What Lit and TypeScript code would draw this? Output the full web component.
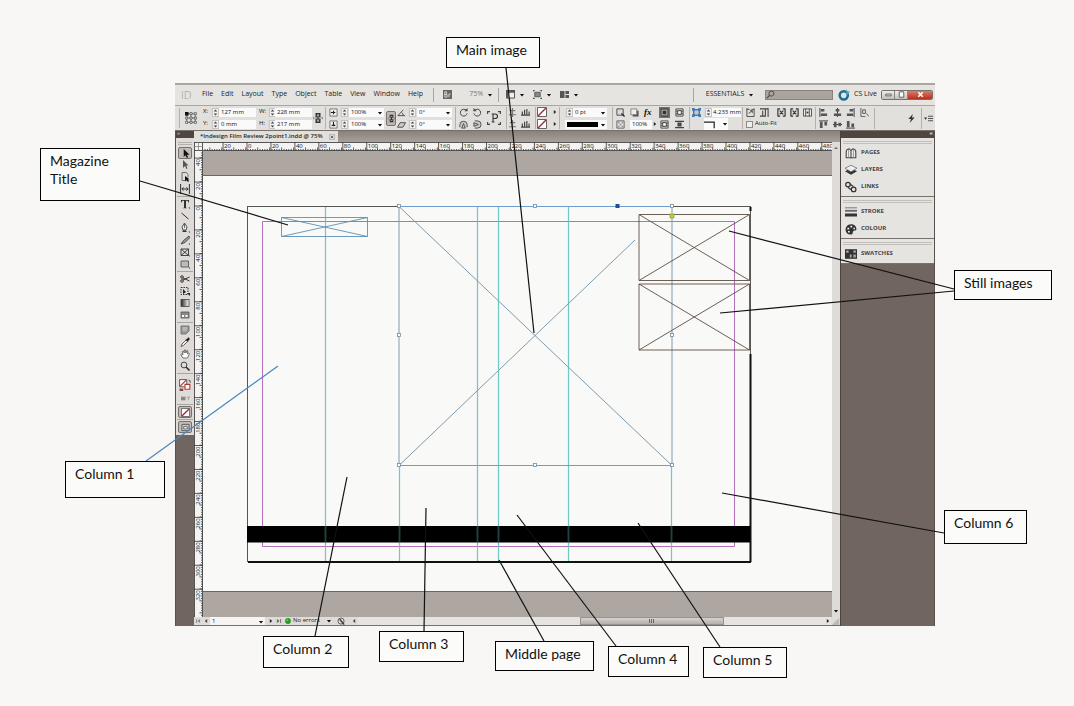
import { LitElement, html, svg, css, TemplateResult } from "lit";
import { customElement } from "lit/decorators.js";

const icons: Record<string, TemplateResult> = {
  select: svg`<path d="M3 0v9l2-2 1.500 3 1.500-.8L6.500 6.500h3z" fill="#111"/>`,
  direct: svg`<path d="M3 0v8l2-2 1.500 3 1-.5L6.200 5.500h2.300z" fill="#555"/>`,
  page: svg`<path d="M2 .5h4.500l1.500 2v3M2 .5v8h3" fill="#ddd" stroke="#555" stroke-width=".8"/><path d="M5 4v5.500l1.500-1.300L8 10l1-.7-1-2h1.500z" fill="#111"/>`,
  gap: svg`<path d="M.6 0v10M9.400 0v10M2 5h6M3.500 3.300L1.800 5l1.700 1.700M6.500 3.300L8.200 5 6.500 6.700" fill="none" stroke="#333"/>`,
  type: svg`<path d="M1 1h8v2.400h-.6C8.200 2 7.600 1.800 6 1.800V8.500l1 .7H3l1-.7V1.800C2.400 1.800 1.800 2 1.600 3.400H1z" fill="#333"/><path d="M8.500 8.500h1.500v1.500z" fill="#222"/>`,
  line: svg`<path d="M1.500 2l7 6" stroke="#333"/>`,
  pen: svg`<path d="M4.500 0L7 4 6 7H3L2 4z" fill="#eee" stroke="#444" stroke-width=".9"/><path d="M4.500 1v4" stroke="#333" stroke-width=".7"/><path d="M2.500 7.500h4v1.500h-4zM8.500 8.500H10V10z" fill="#333"/>`,
  pencil: svg`<path d="M9 1L3.500 5.500 1 9l4-1.500L9.500 3z" fill="#999" stroke="#333" stroke-width=".8"/><path d="M8.500 8.500H10V10z" fill="#222"/>`,
  frame: svg`<path d="M1 2h7.500v6.500H1zM1 2l7.500 6.500M8.500 2L1 8.500" fill="none" stroke="#333" stroke-width=".9"/><path d="M9 8.500h1V10z" fill="#222"/>`,
  rect: svg`<path d="M1 2h7.500v6H1z" fill="#bbb" stroke="#555" stroke-width=".9"/><path d="M8.500 8.500H10V10z" fill="#222"/>`,
  scissors: svg`<path d="M9.500 3L3 6M9.500 7L3 4" stroke="#333"/><circle cx="2" cy="3" r="1.300" fill="none" stroke="#333"/><circle cx="2" cy="7" r="1.300" fill="none" stroke="#333"/>`,
  transform: svg`<rect x="1" y="1.500" width="7" height="7" fill="none" stroke="#333" stroke-dasharray="1.500 1"/><path d="M3 3v5l3-2z" fill="#222"/><path d="M7 7h3v3z" fill="#222"/>`,
  gradient: svg`<defs><linearGradient id="g"><stop offset="0" stop-color="#222"/><stop offset="1" stop-color="#fff"/></linearGradient></defs><rect x="1" y="1.500" width="8" height="7" fill="url(#g)" stroke="#444" stroke-width=".8"/>`,
  feather: svg`<path d="M1 2h8v6H1z" fill="#888" stroke="#555" stroke-width=".8"/><path d="M2 5h2v2H2zM5.500 5h2v2h-2z" fill="#fff"/>`,
  note: svg`<path d="M1 1h8v5L6 9H1z" fill="#999" stroke="#666" stroke-width=".8"/><path d="M2.500 3h5M2.500 5h4" stroke="#eee" stroke-width=".7"/>`,
  dropper: svg`<path d="M1 9.500L2 7l4-4 1.500 1.500-4 4z" fill="#eee" stroke="#444" stroke-width=".8"/><path d="M5.500 2.500L8 5l.5-1.500L10 2 8.300.3 7 2z" fill="#222"/>`,
  hand: svg`<path d="M3 9L.8 5.500l1-.5L3 6 2.300 2.500l1-.3L4.300 4 4.300 1h1.200L5.900 4l1-2.500 1 .3L7.500 5l1.300-1 .7.7L7.500 9z" fill="#fff" stroke="#555" stroke-width=".8"/>`,
  zoom: svg`<circle cx="4" cy="4" r="2.900" fill="#ddd" stroke="#444"/><path d="M6 6l3.500 3.500" stroke="#333" stroke-width="1.600"/>`,
  none: svg`<path d="M.5.500h9v9h-9z" fill="#fff" stroke="#555" stroke-width=".9"/><path d="M1 9l8-8" stroke="#a32b36" stroke-width="1.500"/>`,
  view: svg`<path d="M1 1.500h8v7H1z" fill="#ccc" stroke="#555"/><path d="M3 4h4v2.500H3z" fill="#fff" stroke="#444" stroke-width=".8"/>`,
  swatches: svg`<path d="M.5.500h6v6h-6z" fill="#fff" stroke="#555" stroke-width=".8"/><path d="M1 6l5-5" stroke="#b33"/><path d="M5 4.500h4v4H5z" fill="#fff" stroke="#b33" stroke-width=".9"/><path d="M8 1q1.500 0 1.500 2" fill="none" stroke="#444" stroke-width=".8"/><path d="M.5 8h3v2h-3z" fill="#844"/>`,
  mini: svg`<path d="M0 3h5v4H0z" fill="#888"/><path d="M6.500 3.500H10M8.200 3.500V7" stroke="#999" stroke-width=".9"/>`,
  refpoint: svg`<g fill="#fff" stroke="#444" stroke-width=".6"><path d="M1.500 1.500h7v7h-7zM5 1.500v7M1.500 5h7" fill="none"/><path d="M4.200.5h1.700v1.700H4.200zM7.800.5h1.700v1.700H7.800zM.5 4.200h1.700v1.700H.5zM4.200 4.200h1.700v1.700H4.200zM7.800 4.200h1.700v1.700H7.800zM.5 7.800h1.700v1.700H.5zM4.200 7.800h1.700v1.700H4.200zM7.800 7.800h1.700v1.700H7.800z"/></g><path d="M0 0h3v3H0z" fill="#111"/>`,
  chain: svg`<path d="M3.500 4.500V1.500h3v3M3.500 5.500v3h3v-3M5 3v4" fill="none" stroke="#333" stroke-width="1.200"/><path d="M1.500 4v2M8.500 4v2" stroke="#666" stroke-width=".8"/>`,
  scaleX: svg`<path d="M1 1h8v8H1z" fill="#eee" stroke="#555" stroke-width=".8"/><path d="M2 5h5M5 3v4" stroke="#222" stroke-width="1.200"/>`,
  scaleY: svg`<path d="M1 1h8v8H1z" fill="#eee" stroke="#555" stroke-width=".8"/><path d="M5 2v5M3 6h4" stroke="#222" stroke-width="1.200"/>`,
  angle: svg`<path d="M7 2L1 8.500h8M5 5q2 1 2 3.500" fill="none" stroke="#444"/>`,
  shear: svg`<path d="M3.500 3H9.500L6.500 8H.5z" fill="#ccc" stroke="#444"/>`,
  rotCw: svg`<path d="M8 2.500A3.800 3.800 0 1 0 9 6" fill="none" stroke="#444" stroke-width="1.100"/><path d="M6 3.500h3.500V0z" fill="#444"/>`,
  rotCcw: svg`<path d="M2 2.500A3.800 3.800 0 1 1 1 6" fill="none" stroke="#444" stroke-width="1.100"/><path d="M4 3.500H.5V0z" fill="#444"/>`,
  flipH: svg`<path d="M1 8V5q0-3.500 4-3.500T9 5v3M3 9L5 4l2 5z" fill="#ccc" stroke="#444"/>`,
  flipV: svg`<path d="M2 1h3q4 0 4 4T5 9H2M1 3l5 2-5 2z" fill="#ccc" stroke="#444"/>`,
  align1: svg`<path d="M5 0v10M2 3h6M1 7.500h8" stroke="#777" stroke-width="1.300"/>`,
  dist: svg`<path d="M0 8h10M1.500 8V4M4 8V2M6.500 8V1M9 8V4" stroke="#444" stroke-width="1.300"/>`,
  effA: svg`<path d="M1 1h7v7H1z" fill="#ddd" stroke="#444"/><path d="M6 6l3.500 3.500" stroke="#222" stroke-width="1.400"/>`,
  effB: svg`<path d="M3 3h6.500v6.500H3z" fill="#555"/><path d="M1 1h6.500v6.500H1z" fill="#eee" stroke="#666" stroke-width=".8"/>`,
  checker: svg`<path d="M1 1h8v8H1z" fill="#eee" stroke="#555"/><path d="M2 2h2v2H2zM6 2h2v2H6zM4 4h2v2H4zM2 6h2v2H2zM6 6h2v2H6z" fill="#999"/>`,
  wrapA: svg`<path d="M1 1h8v8H1z" fill="#aaa" stroke="#333" stroke-width="1.200"/><path d="M3 3h4v4H3z" fill="#333"/>`,
  wrapB: svg`<path d="M1 1h8v8H1zM1 3.500h8M1 6.500h8" fill="none" stroke="#444"/><path d="M3 3h4v4H3z" fill="#fff" stroke="#333"/>`,
  jump: svg`<path d="M0 1.500h10M0 8.500h10M3.500 3.500h3v3h-3z" fill="#555" stroke="#444" stroke-width="1.600"/>`,
  corner: svg`<path d="M2 2h6v6H2z" fill="#b9cde0" stroke="#333"/><path d="M0 0h3v3H0zM7 0h3v3H7zM0 7h3v3H0zM7 7h3v3H7z" fill="#3d7dba"/>`,
  cornerShape: svg`<path d="M0 3.500H8.500V8.500" fill="none" stroke="#222"/>`,
  fit: svg`<path d="M1 0v9.500h8V.5M1 1.500h3M6 1.500h3M3 6L7 3M7 3H4.500M7 3v2.500" fill="none" stroke="#444"/>`,
  fitR: svg`<path d="M0 1h6v8H0M3 3v6M9 0v10M4 1h5" fill="none" stroke="#444" stroke-width="1.200"/>`,
  fitB: svg`<path d="M.5 1h9v8h-9zM3 1v8M7 1v8" fill="#eee" stroke="#444"/><path d="M4 4h2v2H4z" fill="#333"/>`,
  fitC: svg`<path d="M.5 1h3M6.500 1h3M.5 9h3M6.500 9h3M1 1v8M9 1v8M3 7l4-4M3 3l4 4" fill="none" stroke="#333" stroke-width="1.300"/>`,
  alL: svg`<path d="M1 0v10" stroke="#333"/><path d="M2 1h4v3H2zM2 6h7v3H2z" fill="#555"/>`,
  alC: svg`<path d="M5 0v10" stroke="#333"/><path d="M3 1h4v3H3zM1 6h8v3H1z" fill="#555"/>`,
  alR: svg`<path d="M9 0v10" stroke="#333"/><path d="M4 1h4v3H4zM1 6h7v3H1z" fill="#555"/>`,
  alP: svg`<path d="M1 0v9.500h5M3 2h3v4H3zM7 6l3 3.500" fill="none" stroke="#555"/>`,
  alT: svg`<path d="M0 1h10" stroke="#333"/><path d="M1 2h3v7H1zM6 2h3v4H6z" fill="#555"/>`,
  alM: svg`<path d="M0 5h10" stroke="#333"/><path d="M1 2h3v6H1zM6 3h3v4H6z" fill="#555"/>`,
  alB: svg`<path d="M0 9h10" stroke="#333"/><path d="M1 1h3v7H1zM6 4h3v4H6z" fill="#555"/>`,
  bolt: svg`<path d="M6.500 0L1.500 5.500h3L3 10l5.500-6H5.500z" fill="#333"/>`,
  menu: svg`<path d="M0 4h3.500L1.700 6.500z" fill="#333"/><path d="M4.500 2.500H10M4.500 5H10M4.500 7.500H10" stroke="#444"/>`,
  bridge: svg`<path d="M0 0h10v10H0z" fill="#666"/><path d="M2 2v6h2.500V5H2M2 2h2v3M6.500 8V4.500H8.500" fill="none" stroke="#ddd"/>`,
  screen: svg`<path d="M.5 1h9v8h-9z" fill="#eee" stroke="#444"/><path d="M0 0h10v3H0zM0 3h2.500v6H0z" fill="#555"/>`,
  fullscreen: svg`<path d="M2 2.500h6v5H2z" fill="#888" stroke="#555"/><path d="M0 2V.5h2M8 .5h2V2M0 8v1.500h2M8 9.500h2V8" fill="none" stroke="#444"/>`,
  arrange: svg`<path d="M0 1h5v8H0zM6 1h4v3.500H6zM6 5.500h4V9H6z" fill="#555"/>`,
  search: svg`<circle cx="6" cy="4" r="2.800" fill="none" stroke="#444"/><path d="M4 6L1 9" stroke="#444" stroke-width="1.300"/>`,
  live: svg`<circle cx="4.800" cy="5.300" r="3.400" fill="none" stroke="#1d6f93" stroke-width="2.100"/><path d="M7 0l1 1.800L10 2 8.500 3.500 8.600 5 7 4z" fill="#4ba7c4"/>`,
  pages: svg`<path d="M1 4q0-2 2.500-2.500L5 3l1.500-1.500Q9 2 9 4v5H1zM5 3v6.500" fill="#eee" stroke="#444" stroke-width=".9"/><path d="M3 2v7M7 2v7" stroke="#777" stroke-width=".6"/>`,
  layers: svg`<path d="M0 6l5-2.500L10 6 5 9z" fill="#333"/><path d="M0 3.500L5 1l5 2.500L5 6.500z" fill="#eee" stroke="#777" stroke-width=".7"/>`,
  links: svg`<circle cx="2.500" cy="3" r="1.900" fill="none" stroke="#333"/><circle cx="7.200" cy="7" r="1.900" fill="none" stroke="#333"/><path d="M4 2.500l3 2M2.500 5.500l3 2" stroke="#333"/>`,
  stroke: svg`<path d="M0 1.500h10" stroke="#888"/><path d="M0 4h10" stroke="#666" stroke-width="1.500"/><path d="M0 7.500h10" stroke="#333" stroke-width="2.500"/>`,
  colour: svg`<path d="M5 1C2 1 .3 3.500.5 6c.2 2.500 2.500 4 5 3.500 1.500-.3.500-2 1.500-2.800s2.500 0 2.500-1.700C9.500 2.500 7.500 1 5 1z" fill="#333"/><path d="M2 4h1.500v1.500H2zM4.500 2.300H6v1.500H4.500zM7 4h1.300v1.300H7zM2.500 6.700H4v1.300H2.500z" fill="#eee"/>`,
  swatch: svg`<path d="M0 1h10v8H0z" fill="#333"/><path d="M1 2h2v2H1zM4 5.500h1.500V8H4zM7 2h2v2H7zM7 5.500h2V8H7z" fill="#aaa"/>`,
  dot: svg`<circle cx="5" cy="5" r="4.800" fill="#2f9a28"/><circle cx="4" cy="3.500" r="1.500" fill="#7ccc6c"/>`,
  preflight: svg`<circle cx="4.500" cy="4.500" r="3.400" fill="#ddd" stroke="#555"/><path d="M3 2.500l5 6" stroke="#333" stroke-width="1.500"/>`,
  down: svg`<path d="M1.500 3.500h7L5 7.500z" fill="#111"/>`,
  right: svg`<path d="M3 1.500v7L7 5z" fill="#222"/>`,
  left: svg`<path d="M7 1.500v7L3 5z" fill="#444"/>`,
  up: svg`<path d="M1.500 6.500h7L5 3z" fill="#777"/>`,
  first: svg`<path d="M8.500 1.500v7L4 5zM2 1.500h1.500v7H2z" fill="#888"/>`,
  last: svg`<path d="M1.500 1.500v7L6 5zM7 1.500h1.500v7H7z" fill="#666"/>`,
  close: svg`<path d="M.5.500h9v9h-9z" fill="#ddd" stroke="#999"/><path d="M3 3l4 4M7 3L3 7" stroke="#444" stroke-width="1.300"/>`,
  grip: svg`<path d="M9 1v8H1z" fill="#bcb8b4"/>`,
  para: svg`<path d="M1 2.500V1h1.500M7.500 1H9v1.500M1 7.500V9h1.500M7.500 9H9V7.500" fill="none" stroke="#444" stroke-width=".7"/><path d="M3.600 2.500h2q1.600 0 1.600 1.400T5.600 5.300H4.400M4.400 2.500v5M3.600 7.500h1.700" fill="none" stroke="#333" stroke-width=".7"/>`,
  stepper: svg`<path d="M1.500.5h7v9h-7z" fill="#f3f1ef" stroke="#b5b0ab" stroke-width=".8"/><path d="M3 4h4L5 1.800zM3 6h4L5 8.200z" fill="#3a4458"/>`,
};

const ic = (name: string, cls = "i9") =>
  html`<svg class=${cls} viewBox="0 0 10 10" aria-hidden="true">${icons[name]}</svg>`;
const btn = (name: string, label: string, cls = "", size = "i9") =>
  html`<button class=${cls} aria-label=${label}>${ic(name, size)}</button>`;
const field = (label: string, value: string) =>
  html`<input class="field" aria-label=${label} .value=${value} />`;
const pick = (label: string, value: string, cls = "") => html`<span class="pick ${cls}">
  <select aria-label=${label}><option>${value}</option></select>${ic("down", "i6 caret")}</span>`;

const chrome = css`
  * { box-sizing: border-box; }
  button, input, select { font: inherit; color: inherit; margin: 0; padding: 0; border: 0; background: none; border-radius: 0; }
  button { display: flex; align-items: center; justify-content: center; }
  svg { display: block; flex: none; }
  .i6 { width: 6px; height: 6px; }
  .i9 { width: 9px; height: 9px; }
  .i10 { width: 10px; height: 10px; }
  .i12 { width: 12px; height: 12px; }
  .i16 { width: 16px; height: 16px; }
`;

@customElement("menu-bar")
class MenuBar extends LitElement {
  static styles = [chrome, css`
    :host { display: flex; align-items: center; height: 22px; padding: 0 2px 1px 6px; background: #e6e4e1; border-top: 2px solid #aaa6a2; font-size: 7px; color: #222; }
    .logo { font-size: 11px; font-weight: 300; color: #999; width: 21px; }
    nav { display: flex; gap: 8px; margin-right: 10px; }
    nav a { color: inherit; text-decoration: none; }
    .cell { display: flex; align-items: center; gap: 4px; padding-left: 8px; height: 14px; }
    .rule { border-left: 1px solid #aaa6a2; }
    .bridge { width: 60px; padding-left: 9px; justify-content: space-between; color: #777; }
    .views { gap: 8px; margin-left: 5px; padding-left: 7px; }
    .views button { gap: 4px; }
    .push { flex: 1; }
    .work { width: 67px; padding-left: 6px; font-weight: 500; }
    .find { display: flex; align-items: center; width: 68px; height: 10px; margin: 0 5px; background: #aaa49f; border: 1px solid #898380; }
    .find input { flex: 1; min-width: 0; }
    .live { gap: 4px; width: 43px; justify-content: start; white-space: nowrap; }
    .win { display: flex; height: 10px; border: 1px solid #77716d; border-radius: 2px; overflow: hidden; }
    .win button { width: 13px; border-right: 1px solid #8b8581; background: linear-gradient(#eee, #c3bfbb); }
    .win .x { width: 24px; border: 0; background: linear-gradient(#da7d68, #b7301c); }
  `];
  render() {
    const items = ["File", "Edit", "Layout", "Type", "Object", "Table", "View", "Window", "Help"];
    return html`
      <span class="logo">ID</span>
      <nav>${items.map((t) => html`<a href="#">${t}</a>`)}</nav>
      <div class="cell rule bridge">${btn("bridge", "Bridge")}<button class="cell">75%${ic("down", "i6")}</button></div>
      <div class="cell rule views">
        ${["screen", "fullscreen", "arrange"].map((n) => html`<button aria-label=${n}>${ic(n, "i9")}${ic("down", "i6")}</button>`)}
      </div>
      <span class="push"></span>
      <button class="cell rule work">ESSENTIALS ${ic("down", "i6")}</button>
      <label class="find rule">${ic("search")}<input aria-label="Search" /></label>
      <button class="live">${ic("live", "i12")}CS Live</button>
      <div class="win">
        <button aria-label="Minimise"><svg class="i9" viewBox="0 0 10 10"><path d="M2 4.500h6v2H2z" fill="#fff" stroke="#555" /></svg></button>
        <button aria-label="Restore"><svg class="i9" viewBox="0 0 10 10"><path d="M2.500 2h5v6h-5z" fill="#fff" stroke="#555" /></svg></button>
        <button class="x" aria-label="Close"><svg class="i9" viewBox="0 0 10 10"><path d="M2.500 2.500l5 5M7.500 2.500l-5 5" stroke="#fff" stroke-width="1.800" /></svg></button>
      </div>`;
  }
}

@customElement("control-bar")
class ControlBar extends LitElement {
  static styles = [chrome, css`
    :host { display: flex; align-items: center; height: 26px; background: #e2e0dd; border-top: 1px solid #aaa6a2; border-bottom: 1px solid #77706b; font-size: 6px; color: #111; overflow: hidden; }
    .g { display: grid; grid-auto-flow: column; grid-template-rows: 10px 10px; row-gap: 2px; align-items: center; justify-items: start; flex: none; border-left: 1px solid #b5b0ab; padding-left: 3px; }
    .both { grid-row: 1 / 3; }
    .field, .pick { width: 100%; height: 9px; background: #fafafa; padding-left: 2px; }
    .pick { position: relative; display: block; }
    .pick select { appearance: none; width: 100%; height: 9px; display: block; line-height: 9px; }
    .caret { position: absolute; right: 1px; top: 2px; }
    .pos { grid-template-columns: 24px 8px 8px 37px 3px 9px 7px 37px 13px; border: 0; padding-left: 4px; }
    .ref { border-left: 1px solid #b5b0ab; padding-left: 5px; height: 20px; display: flex; align-items: center; }
    .scale { grid-template-columns: 11px 9px 35px 13px 11px 9px 35px; width: 130px; }
    .lock { height: 15px; width: 10px; background: #bdb8b4; border: 1px solid #77716d; border-radius: 2px; margin-left: 2px; }
    .rot { grid-template-columns: 14px 13px 20px; width: 51px; }
    .sel { grid-template-columns: 13px 14px; width: 29px; }
    .sel, .fill { padding-left: 1px; }
    .fill { grid-template-columns: 15px 8px; width: 24px; }
    .fill .i9 { width: 10px; height: 10px; }
    .wt { grid-template-columns: 8px 34px; width: 53px; padding-left: 5px; }
    .wide { grid-area: 2 / 1 / 3 / 3; }
    .bar { padding: 2px 9px 2px 2px; width: 42px; }
    .bar select { background: #000; color: #000; height: 5px; }
    .fx { grid-template-columns: 14px 14px 16px; width: 45px; }
    .fx .pct { grid-area: 2 / 2 / 3 / 4; width: 28px; display: flex; align-items: center; }
    .fx i { grid-area: 1 / 3; font-family: "Liberation Serif", serif; font-weight: 700; font-size: 9px; line-height: 9px; }
    .wrap { grid-template-columns: 15px 12px; width: 32px; border: 0; }
    .on { background: #b1aca8; outline: 1px solid #77716d; }
    .crn { grid-template-columns: 12px 8px 29px; width: 53px; padding-left: 2px; }
    .crn .small { width: 24px; grid-area: 2 / 2 / 3 / 4; display: flex; justify-content: space-between; align-items: center; background: #fafafa; }
    .crn .size { grid-area: 1 / 3; padding-left: 1px; }
    .fit { grid-template-columns: 14px 17px 13px 13px 12px; width: 73px; }
    .fit button { grid-row: 1; }
    .auto { grid-area: 2 / 1 / 3 / 4; display: flex; align-items: center; gap: 2px; white-space: nowrap; }
    .auto input { width: 7px; height: 7px; appearance: none; border: 1px solid #8f8a86; background: #eee; }
    .al { grid-template-columns: 14px 13px 14px 12px; width: 59px; }
    .end { flex: 1; min-width: 40px; display: flex; justify-content: flex-end; align-items: center; gap: 5px; height: 21px; border-left: 1px solid #b5b0ab; padding-right: 2px; }
    .end .m { border-left: 1px solid #b5b0ab; padding-left: 2px; height: 21px; }
  `];
  render() {
    const s = ic("stepper");
    return html`
      <div class="g pos">
        <span class="both ref">${ic("refpoint", "i12")}</span>
        <span>X:</span><span>Y:</span>${s}${s}${field("X", "127 mm")}${field("Y", "0 mm")}
        <span></span><span></span><span>W:</span><span>H:</span>${s}${s}${field("W", "228 mm")}${field("H", "217 mm")}
        <span class="both">${ic("chain", "i12")}</span>
      </div>
      <div class="g scale">
        ${ic("scaleX")}${ic("scaleY")}${s}${s}${pick("Scale X", "100%")}${pick("Scale Y", "100%")}
        <button class="both lock" aria-label="Constrain">${ic("chain")}</button>
        ${ic("angle")}${ic("shear")}${s}${s}${pick("Rotation", "0°")}${pick("Shear", "0°")}
      </div>
      <div class="g rot">${btn("rotCw", "Rotate clockwise")}${btn("flipH", "Flip horizontal")}${btn("rotCcw", "Rotate anticlockwise")}${btn("flipV", "Flip vertical")}<span class="both">${ic("para", "i16")}</span></div>
      <div class="g sel">${ic("align1")}${ic("align1")}${ic("dist")}${ic("dist")}</div>
      <div class="g fill">${btn("none", "Fill")}${btn("none", "Stroke")}${ic("right", "i6")}${ic("right", "i6")}</div>
      <div class="g wt">${s}<span class="wide">${pick("Stroke type", "", "bar")}</span>${pick("Weight", "0 pt")}</div>
      <div class="g fx">${btn("effA", "Effects")}${btn("checker", "Opacity")}${btn("effB", "Shadow")}<i>fx</i><span class="pct">${field("Opacity", "100%")}${ic("right", "i6")}</span></div>
      <div class="g wrap">${btn("wrapA", "No wrap", "on")}${btn("wrapB", "Wrap box")}${btn("wrapB", "Wrap shape")}${btn("jump", "Jump")}</div>
      <div class="g crn">${ic("corner")}<span></span>${s}<input class="field size" aria-label="Corner size" .value=${"4.233 mm"} />
        <button class="small" aria-label="Corner shape">${ic("cornerShape", "i12")}${ic("down", "i6")}</button></div>
      <div class="g fit">${btn("fit", "Fill frame")}${btn("fitR", "Fit content")}${btn("fitC", "Fit frame")}${btn("fitC", "Fit both")}${btn("fitB", "Centre")}<label class="auto"><input type="checkbox" />Auto-Fit</label></div>
      <div class="g al">${["alL", "alT", "alC", "alM", "alR", "alB", "alP"].map((n) => btn(n, n))}</div>
      <div class="end">${btn("bolt", "Quick apply")}${btn("menu", "Panel menu", "m")}</div>`;
  }
}

@customElement("tool-box")
class ToolBox extends LitElement {
  static styles = [chrome, css`
    :host { display: block; width: 19px; background: #70655f; border-left: 1px solid #57504c; }
    header { height: 7px; background: #50463f; color: #ddd; font-size: 6px; line-height: 5px; padding-left: 1px; }
    .panel { background: #dedbd8; padding: 4px 1px 2px; display: flex; flex-direction: column; }
    .grip { height: 3px; margin: 0 1px 2px; border-top: 1px solid #b5b0ab; border-bottom: 1px solid #b5b0ab; }
    button { height: 12px; }
    .on { background: #c1bcb8; border: 1px solid #77716d; border-radius: 2px; margin: 0 1px; }
    .tall { height: 19px; }
    .short { height: 9px; }
    hr { width: 100%; margin: 1px 0; border: 0; border-top: 1px solid #aaa6a2; }
  `];
  render() {
    const groups = [["direct", "page", "gap"], ["type", "line", "pen", "pencil", "frame", "rect"], ["scissors", "transform", "gradient", "feather"], ["note", "dropper", "hand", "zoom"]];
    return html`<header>»</header>
      <div class="panel"><div class="grip"></div>${btn("select", "Selection", "on")}
        ${groups.map((g) => html`${g.map((n) => btn(n, n, "", "i10"))}<hr />`)}
        ${btn("swatches", "Fill and stroke", "tall", "i12")}${btn("mini", "Formatting", "short")}<hr />
        ${btn("none", "Apply none", "on")}<hr />${btn("view", "View mode", "on")}
      </div>`;
  }
}

@customElement("panel-dock")
class PanelDock extends LitElement {
  static styles = [chrome, css`
    :host { display: block; width: 95px; background: #70655f; border-left: 1px solid #4a423d; border-right: 1px solid #57504c; font-size: 6px; font-weight: 700; color: #444; }
    header { height: 7px; background: #50463f; color: #ddd; line-height: 5px; text-align: right; padding-right: 1px; }
    section { background: #e6e4e1; padding: 3px 2px 1px; border-bottom: 1px solid #77716d; }
    .grip { height: 3px; border-top: 1px solid #c3bfbb; border-bottom: 1px solid #c3bfbb; }
    button { width: 100%; height: 17px; justify-content: flex-start; gap: 4px; padding-left: 2px; }
  `];
  render() {
    const groups = [
      [["pages", "PAGES"], ["layers", "LAYERS"], ["links", "LINKS"]],
      [["stroke", "STROKE"], ["colour", "COLOUR"]],
      [["swatch", "SWATCHES"]],
    ];
    return html`<header>«</header>${groups.map((g) => html`<section><div class="grip"></div>
      ${g.map(([i, t]) => html`<button>${ic(i, "i12")}${t}</button>`)}</section>`)}`;
  }
}

@customElement("document-view")
class DocumentView extends LitElement {
  static styles = [chrome, css`
    :host { display: block; min-width: 0; background: #e2e0dd; font-size: 6px; color: #222; }
    .tabs { height: 11px; background: linear-gradient(#8b817b, #a79f99); display: flex; }
    .tab { display: flex; align-items: center; gap: 6px; padding: 0 3px 0 6px; background: #e2e0dd; font-weight: 600; white-space: nowrap; }
    .body { display: flex; }
    .art { flex: 1; min-width: 0; }
    .art svg { width: 100%; height: auto; }
    .art text { font-size: 6px; fill: #111; }
    .vbar { width: 8px; display: flex; flex-direction: column; justify-content: space-between; align-items: center; padding: 3px 0; background: #dedbd8; }
    .status { display: flex; align-items: center; height: 9px; background: #dedbd8; border-bottom: 1px solid #77716d; padding-left: 1px; }
    .nav { gap: 2px; display: flex; width: 15px; }
    .status .pg { position: relative; width: 55px; height: 8px; background: #f5f4f2; }
    .pg select { appearance: none; display: block; width: 100%; height: 8px; line-height: 8px; padding-left: 2px; }
    .caret { position: absolute; right: 1px; top: 2px; }
    .fwd { display: flex; gap: 2px; width: 20px; padding-left: 3px; }
    .err { display: flex; align-items: center; justify-content: flex-start; gap: 2px; width: 41px; white-space: nowrap; }
    .pf { display: flex; align-items: center; gap: 5px; width: 32px; }
    .track { flex: 1; display: flex; align-items: center; height: 8px; background: #e6e4e1; }
    .room { flex: 222; }
    .thumb { flex: 143; height: 8px; background: linear-gradient(#d8d3d0, #b5afab); border: 1px solid #99938f; display: flex; justify-content: center; align-items: center; }
    .thumb span { width: 5px; height: 4px; border-left: 1px solid #666; border-right: 1px solid #666; }
    .thumb span::before { content: ""; display: block; width: 1px; height: 4px; margin: 0 auto; background: #666; }
    .tail { flex: 107; display: flex; justify-content: flex-end; }
  `];
  handle(x: number, y: number) {
    return svg`<rect x=${x - 1.5} y=${y - 1.5} width="3" height="3" fill="#fff" stroke="#6f8ca8" stroke-width=".8"/>`;
  }
  cross(x: number, y: number, w: number, h: number, c: string) {
    return svg`<path d="M${x} ${y}h${w}v${h}h${-w}zl${w} ${h}M${x + w} ${y}l${-w} ${h}" fill="none" stroke=${c} stroke-width=".9"/>`;
  }
  render() {
    const unit = 1.1975;
    const across = Array.from({ length: 26 }, (_, i) => (i - 1) * 20);
    const down = Array.from({ length: 19 }, (_, i) => (i - 2) * 20);
    const fineX = Array.from({ length: 262 }, (_, i) => 205 + i * 2.395).map((x, i) => `M${x} 150.500v-${i % 5 === 2 ? 3 : 1.5}`).join("");
    const fineY = Array.from({ length: 194 }, (_, i) => 153 + i * 2.395).map((y, i) => `M202.500 ${y}h-${i % 5 === 2 ? 3 : 1.5}`).join("");
    return html`
      <div class="tabs"><div class="tab">*Indesign Film Review 2point1.indd @ 75% ${btn("close", "Close tab", "", "i6")}</div></div>
      <div class="body">
        <div class="art"><svg viewBox="194 142 638 475" role="img" aria-label="Magazine spread with frames and guides">
          <rect x="194" y="142" width="638" height="475" fill="#f4f3f1"/>
          <rect x="203" y="151" width="629" height="466" fill="#aea7a1"/>
          <rect x="203" y="176" width="629" height="415" fill="#f9f9f8"/>
          <path d="M203 175.500H832M203 591.500H832" stroke="#6b645f"/>
          <path d="M194 142.500H832M194 150.500H832M202.500 142V617M194.500 142V617" stroke="#444" stroke-width=".9"/>
          <path d="M198.500 142v9M194 146.500h9" stroke="#777" stroke-width=".7"/>
          <path d="${fineX}${fineY}" stroke="#333" stroke-width=".8"/>
          ${across.map((n) => svg`<path d="M${247 + n * unit} 142v9" stroke="#333" stroke-width=".8"/><text x=${248 + n * unit} y="148">${Math.abs(n)}</text>`)}
          ${down.map((n) => svg`<path d="M194 ${206 + n * unit}h9" stroke="#333" stroke-width=".8"/>
            <text text-anchor="end" transform="translate(200 ${207 + n * unit}) rotate(-90)">${Math.abs(n)}</text>`)}
          <rect x="247.500" y="206.500" width="503" height="355" fill="none" stroke="#5b5550"/>
          <path d="M248 562H751M750.500 354V562M750.500 207v4" fill="none" stroke="#111" stroke-width="2"/>
          <path d="M262.500 221.500h472v325h-472z" fill="none" stroke="#b56fbb"/>
          <rect x="247" y="526" width="503" height="16.500" fill="#000"/>
          <path d="M325.500 207V561M399.500 465V561M477.500 207V561M498.500 207V561M568.500 207V561M671.500 465V561" stroke="#62c4c2" stroke-width="1.200" opacity=".9"/>
          <path d="M325.500 526v16.500M399.500 526v16.500M477.500 526v16.500M498.500 526v16.500M568.500 526v16.500M671.500 526v16.500" stroke="#21413f" stroke-width="1.500"/>
          ${this.cross(281.5, 217.500, 86, 19, "#5b90b5")}
          <path d="M399 206.500H672V465.500H399zL672 465.500M399 465.500L635 240" fill="none" stroke="#7f9bae"/>
          <path d="M399 206.500H672" stroke="#6d9fce"/>
          ${this.cross(639, 214.500, 110.5, 66, "#5b4d43")}${this.cross(639, 284, 110.5, 66, "#5b4d43")}
          ${[[399, 206], [535, 206], [672, 206], [399, 335], [672, 335], [399, 465], [535, 465], [672, 465]].map(([x, y]) => this.handle(x, y))}
          <rect x="615.500" y="204" width="4" height="4" fill="#1f4e96"/>
          <rect x="670" y="214" width="4" height="4" fill="#c3cc34" stroke="#8b9224" stroke-width=".6"/>
        </svg></div>
        <div class="vbar">${ic("up", "i6")}${ic("down", "i6")}</div>
      </div>
      <div class="status">
        <span class="nav">${ic("first", "i6")}${ic("left", "i6")}</span>
        <span class="pg"><select aria-label="Page"><option>1</option></select>${ic("down", "i6 caret")}</span>
        <span class="fwd">${ic("right", "i6")}${ic("last", "i6")}</span>
        <button class="err">${ic("dot", "i6")}No errors</button>
        <span class="pf">${ic("down", "i6")}${ic("preflight")}${ic("left", "i6")}</span>
        <div class="track"><span class="room"></span><div class="thumb"><span></span></div><span class="tail">${ic("right", "i6")}</span></div>
        ${ic("grip", "i9")}
      </div>`;
  }
}

type Note = { text: string; x: number; y: number; w: number; h: number; to: number[][]; blue?: boolean };
const notes: Note[] = [
  { text: "Main image", x: 446, y: 37, w: 94, h: 31, to: [[506, 68, 534, 333]] },
  { text: "Magazine Title", x: 40, y: 148, w: 100, h: 53, to: [[140, 181, 288, 225]] },
  { text: "Still images", x: 954, y: 270, w: 98, h: 30, to: [[954, 289, 729, 231], [954, 291, 720, 313]] },
  { text: "Column 6", x: 944, y: 510, w: 83, h: 34, to: [[944, 533, 722, 493]] },
  { text: "Column 1", x: 65, y: 461, w: 100, h: 37, to: [[146, 461, 278, 366]], blue: true },
  { text: "Column 2", x: 263, y: 636, w: 86, h: 32, to: [[315, 636, 347, 477]] },
  { text: "Column 3", x: 379, y: 631, w: 85, h: 31, to: [[424, 631, 426, 508]] },
  { text: "Middle page", x: 495, y: 641, w: 99, h: 30, to: [[544, 641, 499, 560]] },
  { text: "Column 4", x: 608, y: 646, w: 81, h: 31, to: [[616, 646, 517, 515]] },
  { text: "Column 5", x: 703, y: 647, w: 84, h: 31, to: [[720, 647, 638, 523]] },
];

@customElement("app-root")
class AppRoot extends LitElement {
  static styles = css`
    * { box-sizing: border-box; }
    :host { box-sizing: border-box; display: block; position: relative; min-height: 100vh; padding: 83px 139px 60px 175px; background: #f8f7f5; font-family: "Open Sans", "Noto Sans", sans-serif; line-height: 1.2; overflow: hidden; }
    .work { display: grid; grid-template-columns: auto 1fr auto; }
    .lines { position: absolute; left: 0; top: 0; width: 100%; height: 100%; stroke: #111; stroke-width: 1.2; }
    .lines .blue { stroke: #4a86bd; }
    .note { position: absolute; padding: 3px 9px; background: #fbfbfa; border: 1px solid #000; font: 14px/18px Lato, sans-serif; color: #111; }
  `;
  render() {
    return html`
      <main>
        <menu-bar></menu-bar>
        <control-bar></control-bar>
        <div class="work"><tool-box></tool-box><document-view></document-view><panel-dock></panel-dock></div>
      </main>
      <svg class="lines" aria-hidden="true">
        ${notes.map((n) => n.to.map(([a, b, c, d]) => svg`<line class=${n.blue ? "blue" : ""} x1=${a} y1=${b} x2=${c} y2=${d}/>`))}
      </svg>
      ${notes.map((n) => html`<div class="note" style="left:${n.x}px;top:${n.y}px;width:${n.w}px;height:${n.h}px">${n.text}</div>`)}`;
  }
}
